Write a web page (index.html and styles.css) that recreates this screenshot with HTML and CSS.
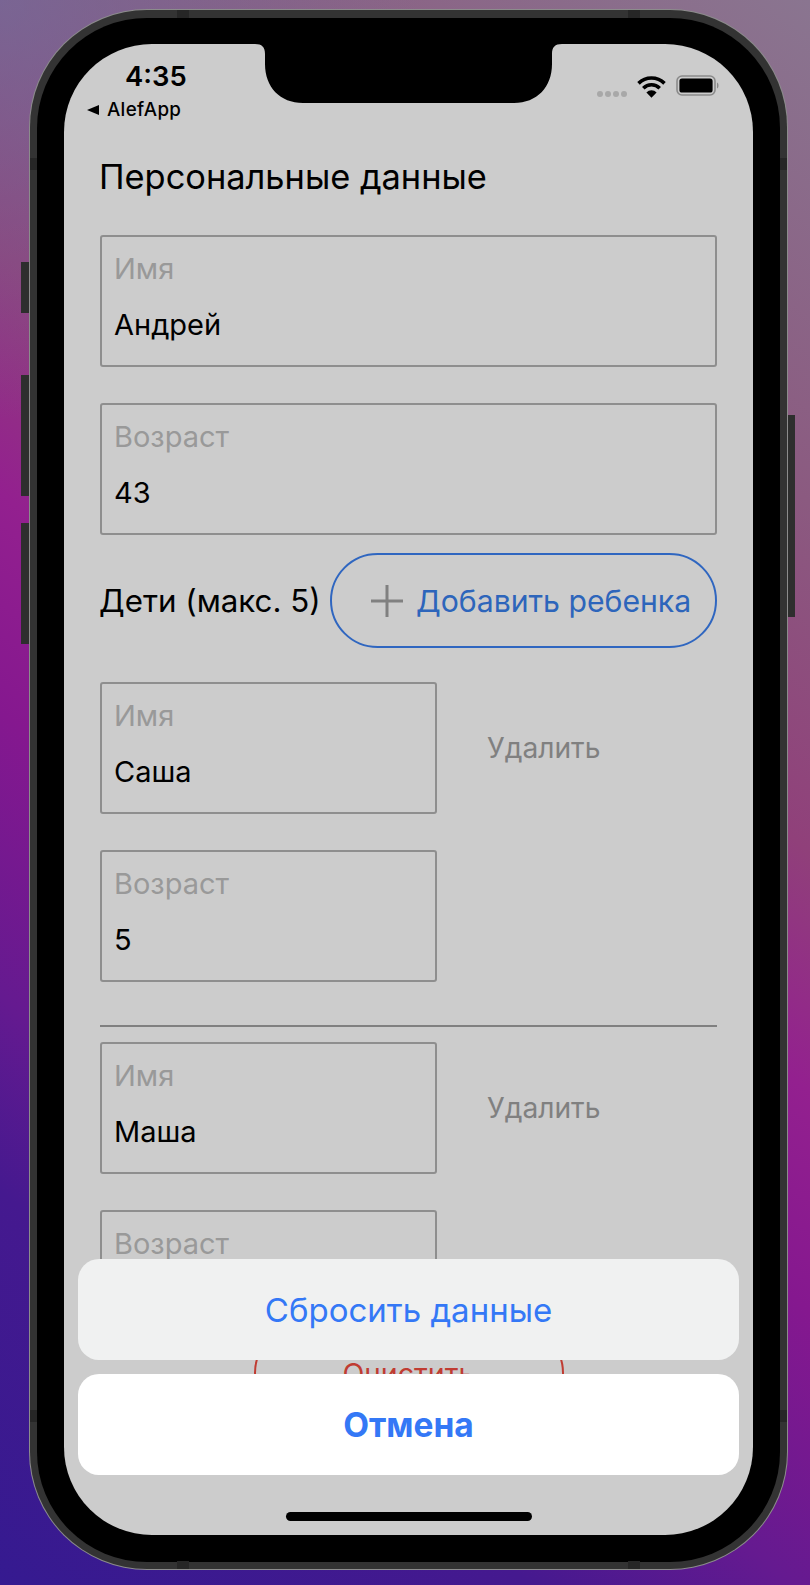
FILE: index.html
```html
<!DOCTYPE html>
<html lang="ru">
<head>
<meta charset="utf-8">
<title>AlefApp</title>
<link rel="stylesheet" href="styles.css">
</head>
<body>
<div class="device">
  <span class="side side-mute"></span>
  <span class="side side-up"></span>
  <span class="side side-down"></span>
  <span class="side side-power"></span>
  <div class="bezel">
    <span class="band band-t1"></span><span class="band band-t2"></span>
    <span class="band band-b1"></span><span class="band band-b2"></span>
    <span class="band band-l1"></span><span class="band band-r1"></span>
    <span class="band band-l2"></span><span class="band band-r2"></span>
    <div class="glass">
      <main class="screen">
        <svg class="notch" viewBox="0 0 307 59" width="307" height="59" aria-hidden="true">
          <path d="M0 0C7 0 10 3 10 10V20C10 43 25 59 48 59H259C282 59 297 43 297 20V10C297 3 300 0 307 0Z" fill="#000"/>
        </svg>
        <header class="status">
          <div class="status-left">
            <div class="clock">4:35</div>
            <div class="back"><svg class="back-arrow" viewBox="0 0 12 12" width="12" height="12" aria-hidden="true"><path d="M12 1V11L0 6Z" fill="#000"/></svg>AlefApp</div>
          </div>
          <div class="status-right">
            <div class="dots"><i></i><i></i><i></i><i></i></div>
            <svg class="wifi" viewBox="0 0 29 23" width="29" height="23" aria-hidden="true">
              <path d="M1.5 8.4A18.5 18.5 0 0 1 27.5 8.4" fill="none" stroke="#000" stroke-width="3.6"/>
              <path d="M6.3 13.2A11.6 11.6 0 0 1 22.7 13.2" fill="none" stroke="#000" stroke-width="3.6"/>
              <path d="M14.5 22.8L9.4 17.5A7 7 0 0 1 19.6 17.5Z" fill="#000"/>
            </svg>
            <svg class="battery" viewBox="0 0 44 21" width="44" height="21" aria-hidden="true">
              <rect x="1" y="1" width="38" height="19" rx="5" fill="none" stroke="#8a8a8a" stroke-width="1.6"/>
              <rect x="3.4" y="3.4" width="33.2" height="14.2" rx="2.6" fill="#000"/>
              <path d="M41 7.5C43 8 43 13 41 13.5Z" fill="#8a8a8a"/>
            </svg>
          </div>
        </header>

        <section class="content">
          <h1 class="title">Персональные данные</h1>
          <div class="field">
            <div class="field-label">Имя</div>
            <div class="field-value">Андрей</div>
          </div>
          <div class="field field-next">
            <div class="field-label">Возраст</div>
            <div class="field-value">43</div>
          </div>

          <div class="children-head">
            <div class="children-title">Дети (макс. 5)</div>
            <button class="add-btn" type="button">
              <svg class="plus" viewBox="0 0 32 32" width="32" height="32" aria-hidden="true"><path d="M16 0V32M0 16H32" stroke="#808080" stroke-width="3" fill="none"/></svg>
              <span>Добавить ребенка</span>
            </button>
          </div>

          <div class="child">
            <div class="child-row">
              <div class="field field-child">
                <div class="field-label">Имя</div>
                <div class="field-value">Саша</div>
              </div>
              <button class="del-btn" type="button">Удалить</button>
            </div>
            <div class="field field-child field-next">
              <div class="field-label">Возраст</div>
              <div class="field-value">5</div>
            </div>
          </div>
          <hr class="divider">
          <div class="child">
            <div class="child-row">
              <div class="field field-child">
                <div class="field-label">Имя</div>
                <div class="field-value">Маша</div>
              </div>
              <button class="del-btn" type="button">Удалить</button>
            </div>
            <div class="field field-child field-next">
              <div class="field-label">Возраст</div>
              <div class="field-value">3</div>
            </div>
          </div>
          <div class="clear-wrap"><button class="clear-btn" type="button">Очистить</button></div>
        </section>

        <div class="sheet">
          <button class="sheet-btn sheet-reset" type="button">Сбросить данные</button>
          <button class="sheet-btn sheet-cancel" type="button">Отмена</button>
        </div>
        <div class="home-bar"></div>
      </main>
    </div>
  </div>
</div>
</body>
</html>
```

FILE: styles.css
```css
* { box-sizing: border-box; }
html, body { margin: 0; padding: 0; }
body {
  width: 810px;
  height: 1585px;
  overflow: hidden;
  padding: 9px 0 0 29px;
  font-family: Inter, "Noto Sans", "Liberation Sans", sans-serif;
  color: #000;
  background:
    radial-gradient(circle at 0 0, rgba(110,112,160,.62), rgba(110,112,160,0) 420px),
    linear-gradient(216.5deg, #8a7590 0%, #8b5a80 23%, #90407a 39%, #93208f 50%, #85188f 60%, #651a90 73%, #45198f 82%, #351a90 100%);
}
button { font: inherit; background: none; border: 0; padding: 0; }

.device {
  position: relative;
  width: 759px;
  height: 1561px;
  border-radius: 118px;
  background: #8c8c8c;
  padding: 1px;
}
.side { position: absolute; background: #2e2e2e; }
.side-mute { left: -8px; top: 253px; width: 8px; height: 51px; }
.side-up { left: -8px; top: 366px; width: 8px; height: 121px; }
.side-down { left: -8px; top: 514px; width: 8px; height: 121px; }
.side-power { right: -7px; top: 406px; width: 7px; height: 202px; }

.bezel {
  position: relative;
  height: 100%;
  border-radius: 117px;
  background: #333;
  padding: 8px 7px 7px;
}
.band { position: absolute; background: #262626; }
.band-t1, .band-b1 { left: 147px; width: 12px; height: 8px; }
.band-t2, .band-b2 { left: 598px; width: 12px; height: 8px; }
.band-t1, .band-t2 { top: 0; }
.band-b1, .band-b2 { bottom: 0; }
.band-l1, .band-r1 { top: 148px; width: 7px; height: 12px; }
.band-l2, .band-r2 { top: 1400px; width: 7px; height: 12px; }
.band-l1, .band-l2 { left: 0; }
.band-r1, .band-r2 { right: 0; }

.glass {
  height: 100%;
  border-radius: 110px;
  background: #000;
  padding: 26px 27px 27px 27px;
}
.screen {
  position: relative;
  height: 1491px;
  border-radius: 88px;
  background: #ccc;
  overflow: hidden;
}
.notch { position: absolute; left: 191px; top: 0; display: block; }

.status {
  display: flex;
  justify-content: space-between;
  padding: 18px 33px 0 23px;
  height: 84px;
}
.clock {
  font-size: 27.4px;
  font-weight: 600;
  line-height: 28px;
  padding-left: 38px;
}
.back {
  display: flex;
  align-items: center;
  gap: 8px;
  font-size: 18.8px;
  font-weight: 500;
  line-height: 22px;
  margin-top: 9px;
  letter-spacing: .3px;
}
.back-arrow { display: block; }
.status-right {
  display: flex;
  align-items: flex-start;
  padding-top: 13px;
}
.dots { display: flex; gap: 2px; margin: 16px 10px 0 0; }
.dots i { display: block; width: 6px; height: 6px; border-radius: 50%; background: #a8a8a8; }
.wifi { display: block; margin-right: 10px; }
.battery { display: block; }

.content { padding: 27px 36px 0; }
.title {
  margin: 0 0 36px -1px;
  font-size: 34.4px;
  font-weight: 400;
  line-height: 44px;
}
.field {
  height: 132px;
  border: 2px solid #8e8e8e;
  border-radius: 3px;
  padding: 14px 12px 0;
}
.field-next { margin-top: 36px; }
.field-label { font-size: 29px; line-height: 36px; color: #999; }
.field-value { font-size: 29px; line-height: 36px; margin-top: 20px; }
.field-child { width: 337px; }

.children-head {
  display: flex;
  align-items: center;
  justify-content: space-between;
  margin: 18px 0 34px;
}
.children-title { margin-left: -1px; font-size: 31.3px; line-height: 36px; white-space: nowrap; }
.add-btn {
  display: flex;
  align-items: center;
  gap: 13px;
  width: 387px;
  height: 95px;
  padding-left: 39px;
  border: 2px solid #2f66c0;
  border-radius: 48px;
  color: #2d65bb;
  font-size: 30.2px;
  white-space: nowrap;
}
.plus { display: block; flex: none; }

.child-row { display: flex; align-items: center; }
.del-btn { margin-left: 50px; color: #808080; font-size: 28.2px; line-height: 36px; }
.divider { height: 2px; margin: 43px 0 15px; border: 0; background: #808080; }
.clear-wrap { display: flex; justify-content: center; margin-top: -16px; }
.clear-btn {
  width: 310px;
  height: 94px;
  border: 2px solid #c03c32;
  border-radius: 47px;
  color: #c03c32;
  font-size: 28.6px;
}

.sheet {
  position: absolute;
  left: 14px;
  right: 14px;
  top: 1215px;
  display: flex;
  flex-direction: column;
  gap: 14px;
}
.sheet-btn {
  height: 101px;
  border-radius: 21px;
  color: #3478f6;
  font-size: 33px;
}
.sheet-reset { background: #f0f1f1; }
.sheet-cancel { background: #fff; font-weight: 700; font-size: 33.5px; }
.home-bar {
  position: absolute;
  left: 222px;
  bottom: 14px;
  width: 246px;
  height: 9px;
  border-radius: 5px;
  background: #000;
}
```
